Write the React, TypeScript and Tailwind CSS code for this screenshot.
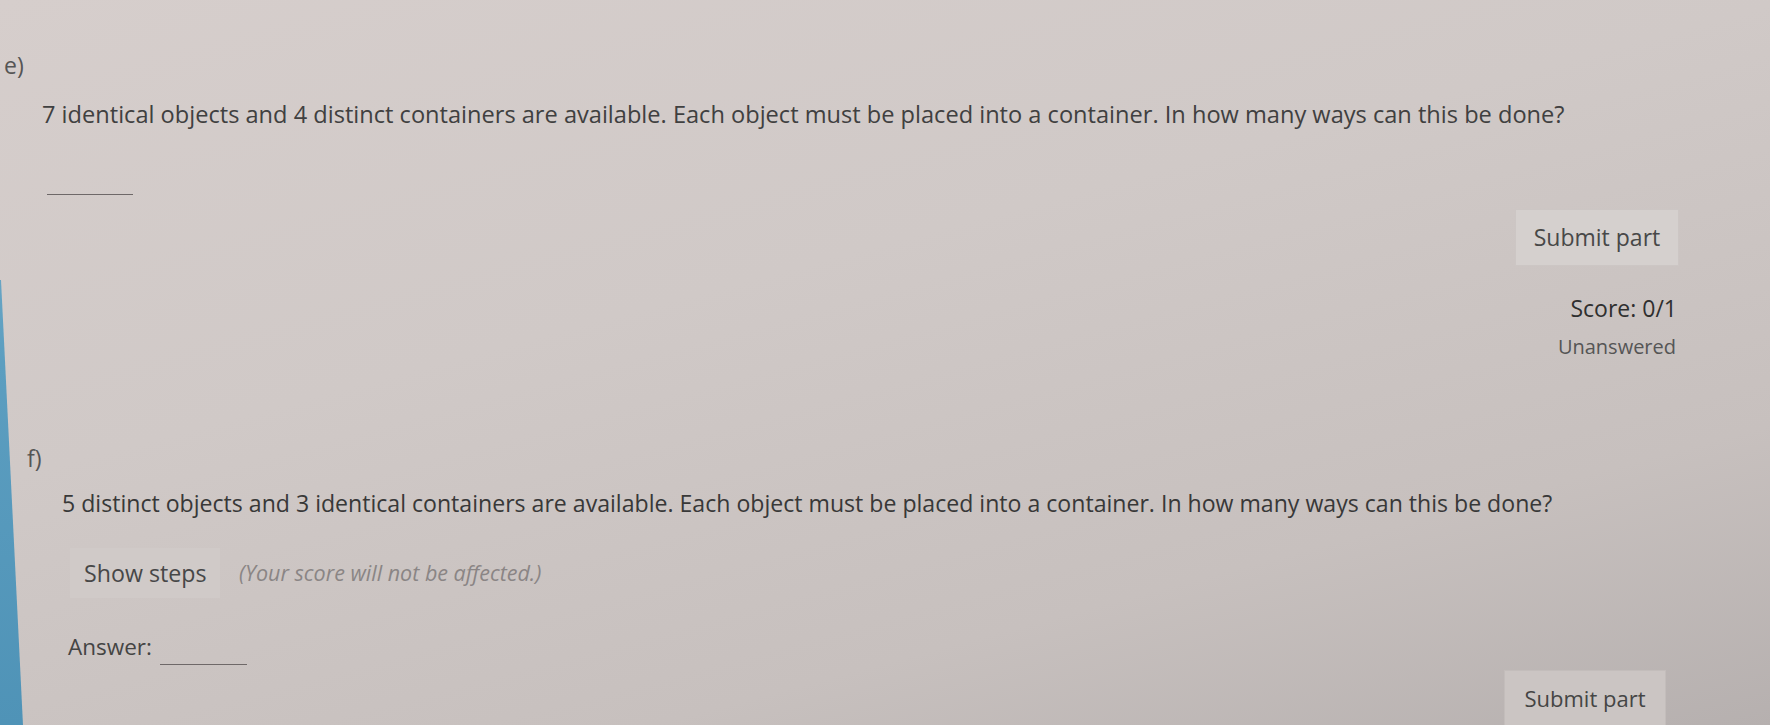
import React from "react";

export default function App() {
  return (
    <div className="relative w-[1770px] h-[725px] overflow-hidden bg-[linear-gradient(165deg,#d6cecc_0%,#d0c9c7_40%,#c7c0be_75%,#b6b0af_100%)] font-['Open_Sans',sans-serif]">
      <div className="absolute left-0 top-0 h-full w-[26px] bg-[linear-gradient(180deg,#8bbad3_0%,#5c9ec0_50%,#4f93b7_100%)] [clip-path:polygon(0_280px,1px_280px,23px_725px,0_725px)]" />
      <div className="flex flex-col">
        <div className="mt-[52px] pl-[4px] h-[26px] text-[23px] leading-[26px] text-[#555]">e)</div>
        <div className="mt-[22px] pl-[42px] h-[28px] text-[23.6px] leading-[28px] text-[#404040] whitespace-nowrap">
          7 identical objects and 4 distinct containers are available. Each object must be placed into a container. In how many ways can this be done?
        </div>
        <div className="mt-[66px] ml-[47px] w-[86px] h-px bg-[#6e6868]" />
        <div className="mt-[14px] flex justify-end pr-[91px]">
          <div className="w-[164px] h-[57px] flex items-center justify-center bg-[#d5d0ce] border border-[#ccc6c4] text-[23px] text-[#484848]">
            Submit part
          </div>
        </div>
        <div className="mt-[28px] pr-[93px] text-right text-[23px] leading-[28px] font-medium text-[#2f2f2f]">Score: 0/1</div>
        <div className="mt-[13px] pr-[94px] text-right text-[20px] leading-[24px] text-[#555]">Unanswered</div>
        <div className="mt-[86px] pl-[27px] h-[26px] text-[23px] leading-[26px] text-[#555]">f)</div>
        <div className="mt-[18px] pl-[62px] h-[28px] text-[23.1px] leading-[28px] text-[#383838] whitespace-nowrap">
          5 distinct objects and 3 identical containers are available. Each object must be placed into a container. In how many ways can this be done?
        </div>
        <div className="mt-[31px] flex items-center">
          <div className="ml-[70px] w-[150px] h-[50px] flex items-center pl-[14px] bg-[#d0cac8] text-[23.2px] text-[#474747]">Show steps</div>
          <div className="ml-[19px] text-[21.5px] italic text-[#8a8585] whitespace-nowrap">(Your score will not be affected.)</div>
        </div>
        <div className="mt-[35px] flex h-[32px]">
          <div className="pl-[68px] text-[22.5px] leading-[28px] text-[#444]">Answer:</div>
          <div className="ml-[8px] mt-[31px] w-[87px] h-px bg-[#6e6868]" />
        </div>
        <div className="mt-[5px] flex justify-end pr-[104px]">
          <div className="w-[162px] h-[57px] flex items-center justify-center bg-[#cbc5c3] border border-[#c3bdbb] text-[22px] text-[#454545]">
            Submit part
          </div>
        </div>
      </div>
    </div>
  );
}
